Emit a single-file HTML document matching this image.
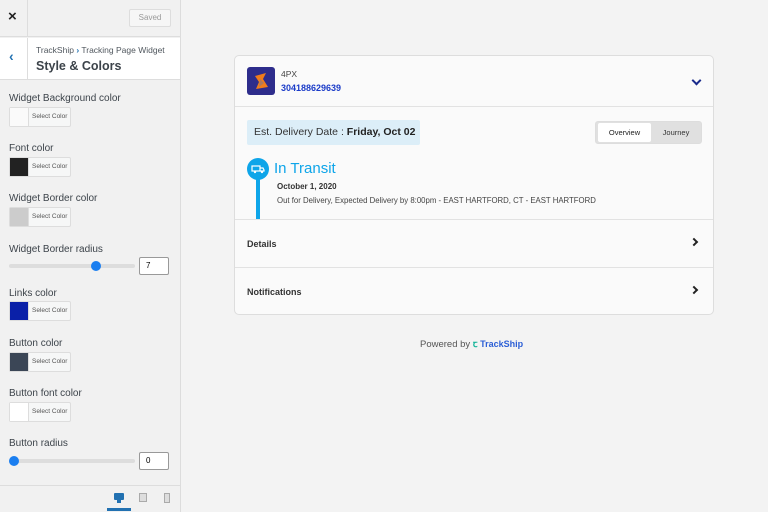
<!DOCTYPE html>
<html><head><style>
*{box-sizing:border-box;margin:0;padding:0}
body{width:768px;height:512px;overflow:hidden;background:#f3f3f3;font-family:"Liberation Sans",sans-serif;position:relative}
.side{position:absolute;left:0;top:0;width:181px;height:512px;background:#f1f1f1;border-right:1px solid #dcdcdc}
.abs{position:absolute;white-space:nowrap}
.lbl{position:absolute;left:9px;font-size:10px;color:#3c434a}
.pick{position:absolute;left:9px;width:62px;height:20px;border:1px solid #ddd;border-radius:2px;background:#f6f7f7;display:flex}
.pick .sw{width:19px;height:100%;border-right:1px solid #ddd}
.pick span{font-size:6.5px;color:#555;line-height:18px;padding-left:3px;white-space:nowrap}
.track{position:absolute;left:9px;width:126px;height:4px;background:#ddd;border-radius:2px}
.knob{position:absolute;width:10px;height:10px;border-radius:50%;background:#1a7ef0}
.inp{position:absolute;left:139px;width:30px;height:18px;border:1px solid #999;background:#fff;font-size:8px;padding:3px 0 0 6px;border-radius:2px}
.card{position:absolute;left:234px;top:55px;width:480px;height:260px;background:#fafafa;border:1px solid #ddd;border-radius:5px;font-family:"Liberation Sans",sans-serif}
.row{position:absolute;left:0;width:478px;border-top:1px solid #e2e2e2}
.row b{position:absolute;left:12px;font-size:9px;color:#333;font-weight:bold}
.chev{position:absolute;right:16px;width:6px;height:6px;border-right:2px solid #222;border-top:2px solid #222;transform:rotate(45deg)}
</style></head><body>
<div class="side">
  <div class="abs" style="left:0;top:0;width:181px;height:37px;border-bottom:1px solid #ddd"></div>
  <div class="abs" style="left:27px;top:0;width:1px;height:37px;background:#ddd"></div>
  <div class="abs" style="left:8px;top:8px;font-size:15px;font-weight:bold;color:#222">×</div>
  <div class="abs" style="left:129px;top:9px;width:42px;height:18px;border:1px solid #ddd;border-radius:2px;font-size:8px;color:#999;text-align:center;line-height:16px;background:#f6f6f6">Saved</div>
  <div class="abs" style="left:0;top:38px;width:180px;height:42px;background:#fff;border-bottom:1px solid #ddd"></div>
  <div class="abs" style="left:27px;top:38px;width:1px;height:42px;background:#ddd"></div>
  <div class="abs" style="left:9px;top:48px;color:#2271b1;font-size:14px;font-weight:bold">‹</div>
  <div class="abs" style="left:36px;top:45px;font-size:8.5px;color:#50575e">TrackShip <span style="color:#2271b1;font-weight:bold">›</span> Tracking Page Widget</div>
  <div class="abs" style="left:36px;top:59px;font-size:12.5px;color:#1d2327;font-weight:bold;color:#3c434a">Style &amp; Colors</div>

  <div class="lbl" style="top:93px">Widget Background color</div>
  <div class="pick" style="top:107px"><div class="sw" style="background:#fafafa"></div><span>Select Color</span></div>
  <div class="lbl" style="top:143px">Font color</div>
  <div class="pick" style="top:157px"><div class="sw" style="background:#222"></div><span>Select Color</span></div>
  <div class="lbl" style="top:193px">Widget Border color</div>
  <div class="pick" style="top:207px"><div class="sw" style="background:#ccc"></div><span>Select Color</span></div>
  <div class="lbl" style="top:244px">Widget Border radius</div>
  <div class="track" style="top:264px"></div><div class="knob" style="left:91px;top:261px"></div>
  <div class="inp" style="top:257px">7</div>
  <div class="lbl" style="top:288px">Links color</div>
  <div class="pick" style="top:301px"><div class="sw" style="background:#0a20a8"></div><span>Select Color</span></div>
  <div class="lbl" style="top:338px">Button color</div>
  <div class="pick" style="top:352px"><div class="sw" style="background:#3b4656"></div><span>Select Color</span></div>
  <div class="lbl" style="top:388px">Button font color</div>
  <div class="pick" style="top:402px"><div class="sw" style="background:#fff"></div><span>Select Color</span></div>
  <div class="lbl" style="top:438px">Button radius</div>
  <div class="track" style="top:459px"></div><div class="knob" style="left:9px;top:456px"></div>
  <div class="inp" style="top:452px">0</div>

  <div class="abs" style="left:0;top:485px;width:180px;height:1px;background:#ddd"></div>
  <div class="abs" style="left:114px;top:493px;width:10px;height:7px;background:#2271b1;border-radius:1px"></div>
  <div class="abs" style="left:117px;top:500px;width:4px;height:3px;background:#2271b1"></div>
  <div class="abs" style="left:107px;top:508px;width:24px;height:3px;background:#2271b1"></div>
  <div class="abs" style="left:139px;top:493px;width:8px;height:9px;border:1px solid #aaa;background:#ddd"></div>
  <div class="abs" style="left:164px;top:493px;width:6px;height:10px;border:1px solid #aaa;background:#ddd"></div>
</div>

<div class="card">
  <div class="abs" style="left:12px;top:11px;width:28px;height:28px;background:#2e2d8c;border-radius:3px">
    <svg width="28" height="28"><path d="M8 9 L19 6 L16 12 L21 20 L9 22 L12 15 Z" fill="#f07c1b"/><path d="M13 12 L17 16 L12 20 Z" fill="#b07a5a"/></svg>
  </div>
  <div class="abs" style="left:46px;top:13px;font-size:8.5px;color:#444">4PX</div>
  <div class="abs" style="left:46px;top:27px;font-size:9px;color:#1a3bc8;font-weight:bold">304188629639</div>
  <div class="abs" style="left:458px;top:21px;width:7px;height:7px;border-right:2px solid #1a2b8c;border-bottom:2px solid #1a2b8c;transform:rotate(45deg)"></div>
  <div class="row" style="top:50px"></div>
  <div class="abs" style="left:12px;top:64px;width:173px;height:25px;background:#dceef8;border-radius:2px;font-size:10.5px;color:#333;line-height:25px;padding-left:7px">Est. Delivery Date : <b style="color:#222">Friday, Oct 02</b></div>
  <div class="abs" style="left:360px;top:65px;width:107px;height:23px;background:#e0e0e0;border-radius:3px;border:1px solid #ddd"></div>
  <div class="abs" style="left:363px;top:67px;width:53px;height:19px;background:#fff;border-radius:2px;font-size:7.5px;text-align:center;line-height:19px;color:#222">Overview</div>
  <div class="abs" style="left:416px;top:67px;width:50px;height:19px;font-size:7.5px;text-align:center;line-height:19px;color:#333">Journey</div>
  <div class="abs" style="left:12px;top:102px;width:22px;height:22px;border-radius:50%;background:#0ea5e9"></div>
  <div class="abs" style="left:21px;top:118px;width:4px;height:45px;background:#0ea5e9"></div>
  <svg class="abs" style="left:16px;top:108px" width="14" height="10"><rect x="1" y="2" width="8" height="5" fill="none" stroke="#fff" stroke-width="1.2"/><path d="M9 4 H12 L13 6 V7 H9" fill="none" stroke="#fff" stroke-width="1.2"/><circle cx="4" cy="8" r="1.2" fill="#fff"/><circle cx="11" cy="8" r="1.2" fill="#fff"/></svg>
  <div class="abs" style="left:39px;top:104px;font-size:15px;color:#0ea5e9">In Transit</div>
  <div class="abs" style="left:42px;top:126px;font-size:8px;color:#333;font-weight:bold">October 1, 2020</div>
  <div class="abs" style="left:42px;top:140px;font-size:7.8px;color:#444">Out for Delivery, Expected Delivery by 8:00pm - EAST HARTFORD, CT - EAST HARTFORD</div>
  <div class="row" style="top:163px;height:49px"><b style="top:19px">Details</b><div class="chev" style="top:19px"></div></div>
  <div class="row" style="top:211px;height:49px"><b style="top:19px">Notifications</b><div class="chev" style="top:19px"></div></div>
</div>
<div class="abs" style="left:420px;top:337px;font-size:9.5px;color:#555">Powered by <span style="color:#17b59a;font-weight:bold">ꞇ</span> <b style="color:#2c5fd6;font-size:9px">TrackShip</b></div>
</body></html>
